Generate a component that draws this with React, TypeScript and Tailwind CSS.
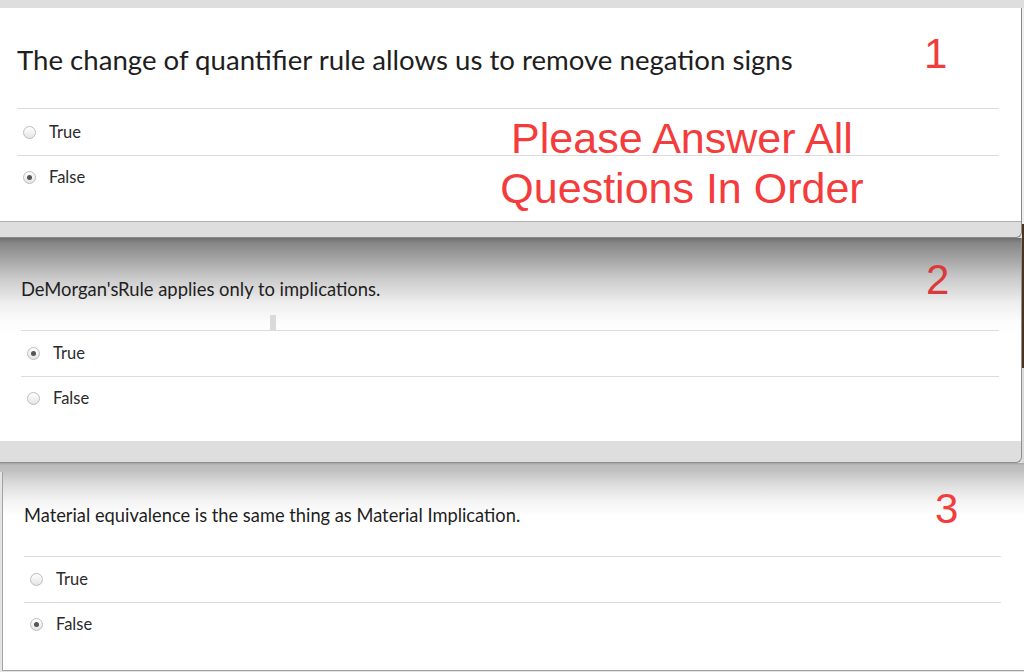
import React from 'react'

type Q = { text: string; answer: 'True' | 'False' }

const lato = "[font-family:Lato,'Liberation_Sans',sans-serif]"

function Radio({ checked }: { checked: boolean }) {
  return (
    <span className="flex h-[13px] w-[13px] shrink-0 items-center justify-center rounded-full border border-[#bdbdbd] bg-[linear-gradient(to_bottom,#ffffff,#e4e4e4)]">
      {checked && <span className="h-[5px] w-[5px] rounded-full bg-[#555555]" />}
    </span>
  )
}

function Options({ answer, tall }: { answer: Q['answer']; tall?: boolean }) {
  return (
    <div>
      {(['True', 'False'] as const).map((opt, i) => (
        <div
          key={opt}
          className={[
            'flex items-center gap-[13px] border-t border-[#dcdcdc] pl-[6px]',
            tall ? 'h-[47px]' : 'h-[46px]',
            i === 1 && 'pb-[3px]',
          ].join(' ')}
        >
          <Radio checked={answer === opt} />
          <span className="text-[16.5px] leading-none text-[#2b2b2b]">{opt}</span>
        </div>
      ))}
    </div>
  )
}

export default function App() {
  return (
    <div className={`flex h-[672px] w-[1024px] flex-col overflow-hidden bg-[#e4e4e4] ${lato}`}>
      {/* strip at top */}
      <div className="h-[8px] shrink-0 bg-[#dedede]" />

      {/* question 1 */}
      <div className="flex h-[230px] shrink-0">
        <div className="flex w-[1022px] flex-col overflow-hidden rounded-br-[6px] border-r border-b border-[#8a8a8a] bg-[#dedede]">
          <div className="relative h-[214px] border-b border-[#b0b0b0] bg-white pt-[36px] pr-[22px] pl-[17px]">
            <p className="mb-[32px] text-[27.6px] leading-[32px] whitespace-nowrap text-[#1e1e1e]">
              The change of quantifier rule allows us to remove negation signs
            </p>
            <Options answer="False" tall />
            <span className="absolute top-[21px] left-[924px] font-['Liberation_Sans',Arial,sans-serif] text-[42px] leading-[50px] text-[#f03c3c]">
              1
            </span>
            <div className="absolute top-[105px] left-[432px] w-[500px] text-center font-['Liberation_Sans',Arial,sans-serif] text-[43px] leading-[50px] text-[#f43c3c]">
              Please Answer All
              <br />
              Questions In Order
            </div>
          </div>
        </div>
        <div className="w-[2px] bg-[linear-gradient(to_bottom,#eeeeee_0,#eeeeee_216px,#4a3420_216px)]" />
      </div>

      {/* question 2 */}
      <div className="flex h-[225px] shrink-0">
        <div className="flex w-[1022px] flex-col overflow-hidden rounded-br-[6px] border-r border-b border-[#8f8f8f] bg-[#dedede]">
          <div className="relative h-[203px] bg-[linear-gradient(to_bottom,#6e6e6e_0,#878787_5px,#a6a6a6_22px,#cacaca_40px,#eeeeee_65px,#fdfdfd_85px,#ffffff_100px)] pt-[39px] pr-[22px] pl-[21px]">
            <p className="mb-[29px] text-[18.4px] leading-[24px] text-[#1e1e1e]">
              DeMorgan'sRule applies only to implications.
            </p>
            <Options answer="True" />
            <span className="absolute top-[77px] left-[270px] h-[15px] w-[6px] bg-[#dadada]" />
            <span className="absolute top-[17px] left-[926px] font-['Liberation_Sans',Arial,sans-serif] text-[42px] leading-[50px] text-[#d93a3a]">
              2
            </span>
          </div>
        </div>
        <div className="w-[2px] bg-[linear-gradient(to_bottom,#4a3420_0,#4a3420_130px,#d9d9d9_130px)]" />
      </div>

      <div className="h-[9px] shrink-0 bg-[linear-gradient(to_bottom,#a3a3a3,#bcbcbc_2px,#c2c2c2)]" />

      {/* question 3 */}
      <div className="h-[199px] shrink-0 pl-[2px]">
        <div className="relative h-full border-b border-l border-[#a2a2a2] bg-[linear-gradient(to_bottom,#c4c4c4_0,#dcdcdc_12px,#f3f3f3_28px,#ffffff_45px)] pt-[31px] pr-[23px] pl-[21px]">
          <p className="mb-[29px] text-[18.3px] leading-[24px] text-[#1e1e1e]">
            Material equivalence is the same thing as Material Implication.
          </p>
          <Options answer="False" />
          <span className="absolute top-[12px] left-[932px] font-['Liberation_Sans',Arial,sans-serif] text-[42px] leading-[50px] text-[#f33c3c]">
            3
          </span>
        </div>
      </div>
    </div>
  )
}
